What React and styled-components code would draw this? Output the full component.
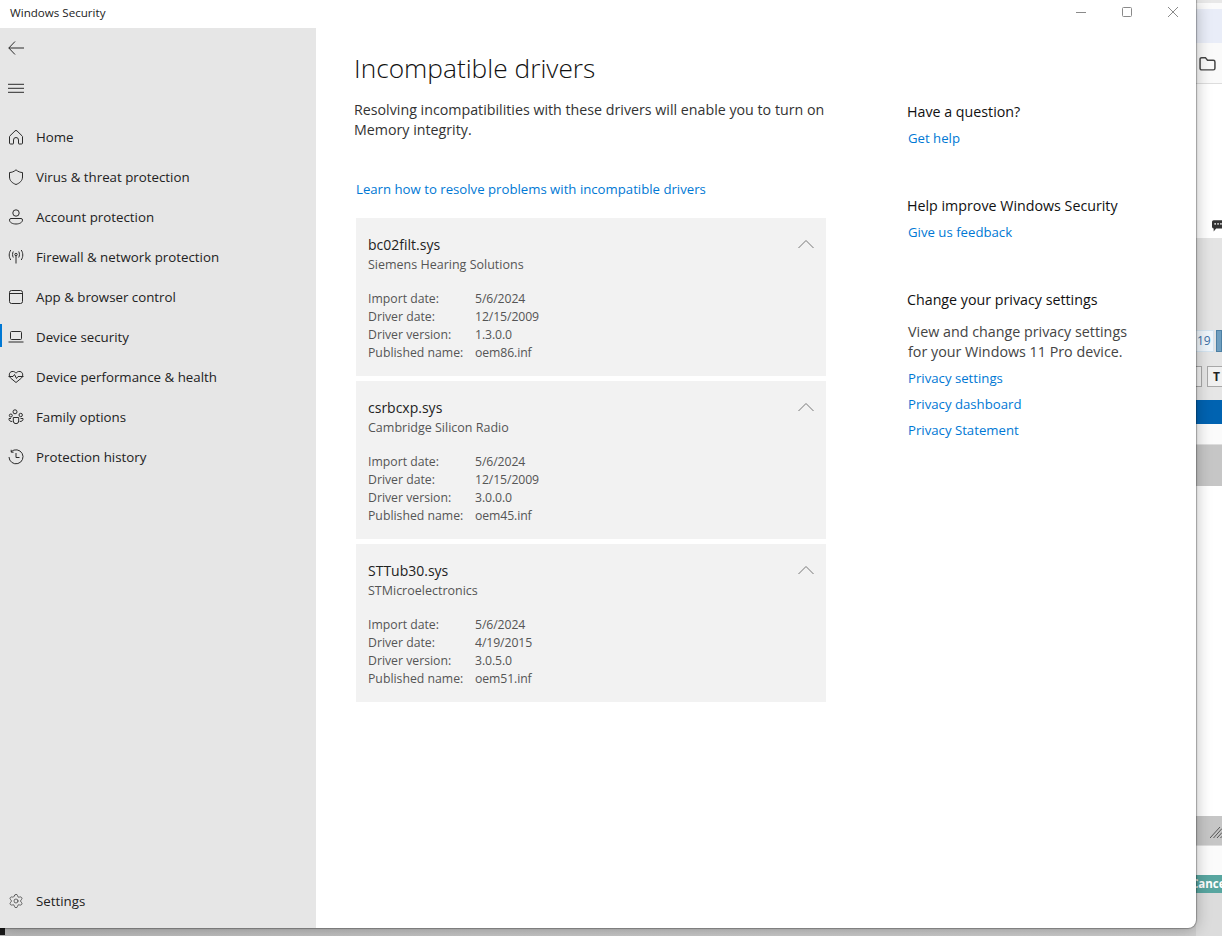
import styled, { createGlobalStyle } from "styled-components"
import { Settings } from "lucide-react"

const FONT = `"Open Sans", "Noto Sans", sans-serif`

const GlobalStyle = createGlobalStyle`
  html, body {
    margin: 0;
    padding: 0;
    background: #cfcfcf;
    font-family: ${FONT};
  }
  * {
    box-sizing: border-box;
  }
`

const navItems = [
  { label: "Home", icon: "home" },
  { label: "Virus & threat protection", icon: "shield" },
  { label: "Account protection", icon: "account" },
  { label: "Firewall & network protection", icon: "firewall" },
  { label: "App & browser control", icon: "app" },
  { label: "Device security", icon: "laptop", active: true },
  { label: "Device performance & health", icon: "heart" },
  { label: "Family options", icon: "family" },
  { label: "Protection history", icon: "history" },
]

const drivers = [
  {
    name: "bc02filt.sys",
    vendor: "Siemens Hearing Solutions",
    importDate: "5/6/2024",
    driverDate: "12/15/2009",
    version: "1.3.0.0",
    published: "oem86.inf",
  },
  {
    name: "csrbcxp.sys",
    vendor: "Cambridge Silicon Radio",
    importDate: "5/6/2024",
    driverDate: "12/15/2009",
    version: "3.0.0.0",
    published: "oem45.inf",
  },
  {
    name: "STTub30.sys",
    vendor: "STMicroelectronics",
    importDate: "5/6/2024",
    driverDate: "4/19/2015",
    version: "3.0.5.0",
    published: "oem51.inf",
  },
]

const NavIcon = ({ name }) => {
  return (
    <IconSvg viewBox="0 0 16 16">
      {name === "home" && (
        <path d="M2 6.8 7 1.9a1.4 1.4 0 0 1 2 0l5 4.9a1 1 0 0 1 .5.9V14a1 1 0 0 1-1 1H11a.5.5 0 0 1-.5-.5V11a2.5 2.5 0 0 0-5 0v3.5a.5.5 0 0 1-.5.5H2.5a1 1 0 0 1-1-1V7.7a1 1 0 0 1 .5-.9z" />
      )}
      {name === "shield" && (
        <path d="M8 .8c2 1.9 4.5 2.7 6.5 2.7V8c0 3.5-2.5 6-6.5 7.5C4 14 1.5 11.5 1.5 8V3.5C3.5 3.5 6 2.700 8 .8z" />
      )}
      {name === "account" && (
        <>
          <circle cx="8" cy="4" r="3.2" />
          <path d="M3 9.500h10a1.500 1.500 0 0 1 1.500 1.500c0 2.500-3 4-6.500 4s-6.500-1.500-6.500-4A1.500 1.500 0 0 1 3 9.500z" />
        </>
      )}
      {name === "firewall" && (
        <>
          <circle cx="8" cy="5.500" r="1.200" />
          <path d="M8 6.700V14.500M5.300 2.500C4.300 4.200 4.300 6.800 5.300 8.500M10.700 2.500c1 1.700 1 4.300 0 6M2.800 1C.7 4 .7 8 2.800 11M13.200 1c2.100 3 2.100 7 0 10" />
        </>
      )}
      {name === "app" && (
        <>
          <rect x="1.500" y="1.500" width="13" height="13" rx="2" />
          <path d="M1.500 4.500h13" />
        </>
      )}
      {name === "laptop" && (
        <>
          <rect x="2.500" y="2.500" width="11" height="8" rx="1" />
          <path d="M.5 13h15" />
        </>
      )}
      {name === "heart" && (
        <path d="M2.500 9C.5 6.700 1 3 4 2.500c1.800-.3 3.200.5 4 1.700.8-1.200 2.200-2 4-1.700 3 .5 3.500 4.200 1.500 6.500L8 13.500zM.5 7.500H5l1.500-2 2 4 1.500-2h5.500" />
      )}
      {name === "family" && (
        <>
          <circle cx="7" cy="2.800" r="2" />
          <circle cx="2.800" cy="6.500" r="1.500" />
          <circle cx="12.700" cy="6" r="1.700" />
          <path d="M5.300 8.500h5.400V12a2.700 2.700 0 0 1-5.400 0zM3 9.500H1v1c0 1.200 1.500 2 3.300 2M12.500 9.500H15v1c0 1.200-1.500 2-3.300 2" />
        </>
      )}
      {name === "history" && (
        <path d="M3.200 2.700A7 7 0 1 1 1 8M3.200 .8v2.400h2.400M8 4v4.500h3.500" />
      )}
    </IconSvg>
  )
}

const DriverCard = ({ driver }) => {
  return (
    <Card>
      <CardHead>
        <div>
          <DriverName>{driver.name}</DriverName>
          <Vendor>{driver.vendor}</Vendor>
        </div>
        <Chevron viewBox="0 0 16 10">
          <path d="M.5 9 8 1.500 15.500 9" />
        </Chevron>
      </CardHead>
      <Details>
        <DetailLabel>Import date:</DetailLabel>
        <DetailValue>{driver.importDate}</DetailValue>
        <DetailLabel>Driver date:</DetailLabel>
        <DetailValue>{driver.driverDate}</DetailValue>
        <DetailLabel>Driver version:</DetailLabel>
        <DetailValue>{driver.version}</DetailValue>
        <DetailLabel>Published name:</DetailLabel>
        <DetailValue>{driver.published}</DetailValue>
      </Details>
    </Card>
  )
}

const App = () => {
  return (
    <Desktop>
      <GlobalStyle />
      <Window>
        <TitleBar>
          <WindowTitle>Windows Security</WindowTitle>
          <Controls>
            <ControlButton>
              <svg viewBox="0 0 12 12">
                <path d="M1 6.500h10" />
              </svg>
            </ControlButton>
            <ControlButton>
              <svg viewBox="0 0 12 12">
                <rect x="1.500" y="1.500" width="9" height="9" rx="1" />
              </svg>
            </ControlButton>
            <ControlButton>
              <svg viewBox="0 0 12 12">
                <path d="M1 1l10 10M11 1 1 11" />
              </svg>
            </ControlButton>
          </Controls>
        </TitleBar>
        <Body>
          <Sidebar>
            <TopButton>
              <IconSvg viewBox="0 0 16 16">
                <path d="M16 8H.8M7 1.500.8 8 7 14.500" />
              </IconSvg>
            </TopButton>
            <TopButton>
              <IconSvg viewBox="0 0 16 16">
                <path d="M0 4.300h16M0 8.300h16M0 12.300h16" />
              </IconSvg>
            </TopButton>
            <NavList>
              {navItems.map((item) => (
                <NavItem key={item.label} $active={item.active}>
                  <NavIcon name={item.icon} />
                  {item.label}
                </NavItem>
              ))}
            </NavList>
            <SettingsItem>
              <Settings size={16} strokeWidth={1} />
              Settings
            </SettingsItem>
          </Sidebar>
          <Main>
            <Column>
              <Title>Incompatible drivers</Title>
              <Description>
                Resolving incompatibilities with these drivers will enable you to turn on Memory integrity.
              </Description>
              <LearnLink>Learn how to resolve problems with incompatible drivers</LearnLink>
              <CardList>
                {drivers.map((driver) => (
                  <DriverCard key={driver.name} driver={driver} />
                ))}
              </CardList>
            </Column>
            <Aside>
              <AsideGroup>
                <AsideHeading>Have a question?</AsideHeading>
                <AsideLink>Get help</AsideLink>
              </AsideGroup>
              <AsideGroup>
                <AsideHeading>Help improve Windows Security</AsideHeading>
                <AsideLink>Give us feedback</AsideLink>
              </AsideGroup>
              <AsideGroup>
                <AsideHeading>Change your privacy settings</AsideHeading>
                <AsideText>View and change privacy settings for your Windows 11 Pro device.</AsideText>
                <AsideLink>Privacy settings</AsideLink>
                <AsideLink>Privacy dashboard</AsideLink>
                <AsideLink>Privacy Statement</AsideLink>
              </AsideGroup>
            </Aside>
          </Main>
        </Body>
      </Window>

      {/* the app behind the window, only a sliver of it shows */}
      <BehindApp>
        <Band $h={3} $bg="#e8e8e8" />
        <Band $h={6} $bg="#fbfbfb" />
        <Band $h={34} $bg="#e9edf8" />
        <Band $h={40} $bg="#fafafa">
          <FolderIcon viewBox="0 0 16 14">
            <path d="M1 3a1.500 1.500 0 0 1 1.500-1.500h3.500l2 2.500h5.500A1.500 1.500 0 0 1 15 5.500v6a1.500 1.500 0 0 1-1.500 1.500h-11A1.500 1.500 0 0 1 1 11.500z" />
          </FolderIcon>
        </Band>
        <Band $h={155} $bg="#ffffff" $line="top" $align="flex-end">
          <ChatIcon viewBox="0 0 12 14">
            <path d="M2 0h10v10H5l-3 3.500V10a2 2 0 0 1-2-2V2a2 2 0 0 1 2-2z" />
            <path className="quote" d="M3 3.500h1.500v2H3zM6.500 3.500H8v2H6.500zM10 3.500h1.500v2H10z" />
          </ChatIcon>
        </Band>
        <Band $h={92} $bg="#e4e4e4" />
        <TabRow>
          <DayTab>19</DayTab>
          <ActiveTab />
        </TabRow>
        <Band $h={14} $bg="#e6e6e6" />
        <ToolRow>
          <ToolButton />
          <ToolButton $wide>T</ToolButton>
        </ToolRow>
        <Band $h={13} $bg="#e6e6e6" />
        <Band $h={24} $bg="#0063b1" />
        <Band $h={21} $bg="#fbfbfb" $line="bottom" />
        <Band $h={41} $bg="#c6c6c6" />
        <Band $h={330} $bg="#ffffff" />
        <Band $h={29} $bg="#c6c6c6" $align="flex-end">
          <Stripes viewBox="0 0 12 11">
            <path d="M0 11 10 0M3.500 11 12 1.500M7 11l5-5.500M10.500 11 12 9.300" />
          </Stripes>
        </Band>
        <Band $h={30} $bg="#fbfbfb" $line="top" />
        <CancelBar>
          <span>Cancel</span>
        </CancelBar>
        <Band $h={43} $bg="#dcdcdc" />
      </BehindApp>

      <Taskbar>
        <TaskbarIcon />
      </Taskbar>
    </Desktop>
  )
}

export default App

const Desktop = styled.div`
  width: 1222px;
  height: 936px;
  overflow: hidden;
  display: grid;
  grid-template-columns: 1196px 26px;
  grid-template-rows: 928px 8px;
`

const Window = styled.div`
  position: relative;
  z-index: 2;
  display: flex;
  flex-direction: column;
  background: #fff;
  border-bottom-right-radius: 8px;
  overflow: hidden;
  box-shadow: 0 0 1px 1px rgba(0, 0, 0, 0.28), 0 2px 16px rgba(0, 0, 0, 0.28);
`

const TitleBar = styled.div`
  height: 28px;
  flex-shrink: 0;
  display: flex;
  justify-content: space-between;
  padding-left: 10px;
`

const WindowTitle = styled.div`
  font-size: 11.6px;
  line-height: 26px;
  color: #222;
`

const Controls = styled.div`
  display: flex;
`

const ControlButton = styled.div`
  width: 46px;
  height: 24px;
  display: flex;
  align-items: center;
  justify-content: center;

  svg {
    width: 12px;
    height: 12px;
    fill: none;
    stroke: #8a8a8a;
    stroke-width: 1;
  }
`

const Body = styled.div`
  flex: 1;
  display: flex;
  min-height: 0;
`

const Sidebar = styled.nav`
  width: 316px;
  flex-shrink: 0;
  background: #e6e6e6;
  display: flex;
  flex-direction: column;
  padding-bottom: 7px;
`

const IconSvg = styled.svg`
  width: 16px;
  height: 16px;
  flex-shrink: 0;
  fill: none;
  stroke: #2b2b2b;
  stroke-width: 1;
`

const TopButton = styled.div`
  height: 40px;
  display: flex;
  align-items: center;
  padding-left: 8px;
`

const NavList = styled.div`
  margin-top: 9px;
  display: flex;
  flex-direction: column;
  flex: 1;
`

const NavItem = styled.div`
  position: relative;
  height: 40px;
  display: flex;
  align-items: center;
  gap: 12px;
  padding-left: 8px;
  font-size: 13.3px;
  color: #222;

  &::before {
    content: "";
    display: ${(props) => (props.$active ? "block" : "none")};
    position: absolute;
    left: 0;
    top: 7px;
    width: 2px;
    height: 23px;
    background: #0078d4;
  }
`

const SettingsItem = styled(NavItem)`
  svg {
    flex-shrink: 0;
    color: #2b2b2b;
  }
`

const Main = styled.main`
  flex: 1;
  display: flex;
  padding: 21px 0 0 38px;
  gap: 81px;
`

const Column = styled.div`
  width: 472px;
  flex-shrink: 0;
`

const Title = styled.h1`
  margin: 0;
  font-size: 26.3px;
  line-height: 38px;
  font-weight: 300;
  color: #111;
`

const Description = styled.p`
  margin: 13px 0 0;
  font-size: 14.24px;
  line-height: 20px;
  color: #333;
`

const LearnLink = styled.a`
  display: block;
  margin: 39px 0 0 2px;
  font-size: 13.2px;
  line-height: 20px;
  color: #0078d4;
`

const CardList = styled.div`
  margin: 19px 0 0 2px;
  display: flex;
  flex-direction: column;
  gap: 5px;
`

const Card = styled.section`
  background: #f2f2f2;
  padding: 17px 12px 14px;
`

const CardHead = styled.div`
  display: flex;
  justify-content: space-between;
  align-items: flex-start;
`

const DriverName = styled.div`
  font-size: 14px;
  line-height: 20px;
  color: #222;
`

const Vendor = styled.div`
  font-size: 12.5px;
  line-height: 20px;
  color: #555;
`

const Chevron = styled.svg`
  width: 16px;
  height: 10px;
  margin-top: 4px;
  fill: none;
  stroke: #777;
  stroke-width: 1;
`

const Details = styled.div`
  margin-top: 15px;
  display: grid;
  grid-template-columns: 107px 1fr;
  line-height: 18px;
  color: #555;
`

const DetailLabel = styled.span`
  font-size: 12.25px;
`

const DetailValue = styled.span`
  font-size: 12.25px;
  letter-spacing: -0.1px;
`

const Aside = styled.aside`
  padding-top: 53px;
  display: flex;
  flex-direction: column;
  gap: 48px;
  width: 240px;
`

const AsideGroup = styled.div`
  display: flex;
  flex-direction: column;
  gap: 6px;
`

const AsideHeading = styled.h2`
  margin: 0;
  font-size: 14.25px;
  line-height: 20px;
  font-weight: 400;
  color: #111;
`

const AsideText = styled.p`
  margin: 6px 0 0 1px;
  font-size: 14.3px;
  line-height: 20px;
  color: #444;
  width: 230px;
`

const AsideLink = styled.a`
  margin-left: 1px;
  font-size: 13.2px;
  line-height: 20px;
  color: #0078d4;
`

const BehindApp = styled.div`
  grid-row: 1 / 3;
  display: flex;
  flex-direction: column;
  overflow: hidden;
  background: #e4e4e4;
`

const Band = styled.div`
  height: ${(props) => props.$h}px;
  flex-shrink: 0;
  display: flex;
  align-items: ${(props) => props.$align || "center"};
  background: ${(props) => props.$bg};
  border-top: ${(props) => (props.$line === "top" ? "1px solid #dddddd" : "none")};
  border-bottom: ${(props) => (props.$line === "bottom" ? "1px solid #dddddd" : "none")};
`

const FolderIcon = styled.svg`
  width: 17px;
  height: 15px;
  margin-left: 3px;
  fill: none;
  stroke: #444;
  stroke-width: 1.4;
`

const ChatIcon = styled.svg`
  width: 12px;
  height: 14px;
  margin: 0 0 5px 16px;
  fill: #333;

  .quote {
    fill: #fff;
  }
`

const TabRow = styled.div`
  height: 22px;
  flex-shrink: 0;
  display: flex;
  gap: 2px;
`

const DayTab = styled.div`
  width: 18px;
  padding-left: 1px;
  background: #eef5fb;
  border: 1px solid #d4e4f0;
  border-left: none;
  font-size: 12px;
  line-height: 20px;
  color: #3b6fa5;
`

const ActiveTab = styled.div`
  flex: 1;
  background: #6f9fc0;
  border: 1px solid #4d80a4;
`

const ToolRow = styled.div`
  height: 21px;
  flex-shrink: 0;
  display: flex;
  gap: 5px;
  background: #e6e6e6;
`

const ToolButton = styled.div`
  width: ${(props) => (props.$wide ? "15px" : "6px")};
  padding-left: 5px;
  background: #f1f1f1;
  border: 1px solid #a8a8a8;
  border-left-width: ${(props) => (props.$wide ? "1px" : "0")};
  border-right-width: ${(props) => (props.$wide ? "0" : "1px")};
  font-size: 12px;
  font-weight: 700;
  line-height: 19px;
  color: #222;
  overflow: hidden;
`

const Stripes = styled.svg`
  width: 12px;
  height: 11px;
  margin: 0 0 7px 14px;
  fill: none;
  stroke: #555;
  stroke-width: 1;
`

const CancelBar = styled.div`
  height: 18px;
  flex-shrink: 0;
  background: #58a6a0;
  overflow: hidden;
  white-space: nowrap;
  font-size: 11.5px;
  font-weight: 700;
  line-height: 18px;
  color: #fff;

  span {
    display: block;
    margin-left: -5px;
  }
`

const Taskbar = styled.div`
  grid-column: 1;
  grid-row: 2;
  background: linear-gradient(90deg, #bdbdbd, #c9c9c9 40%, #d0d0d0);
`

const TaskbarIcon = styled.div`
  width: 5px;
  height: 7px;
  background: #1a1a1a;
`
